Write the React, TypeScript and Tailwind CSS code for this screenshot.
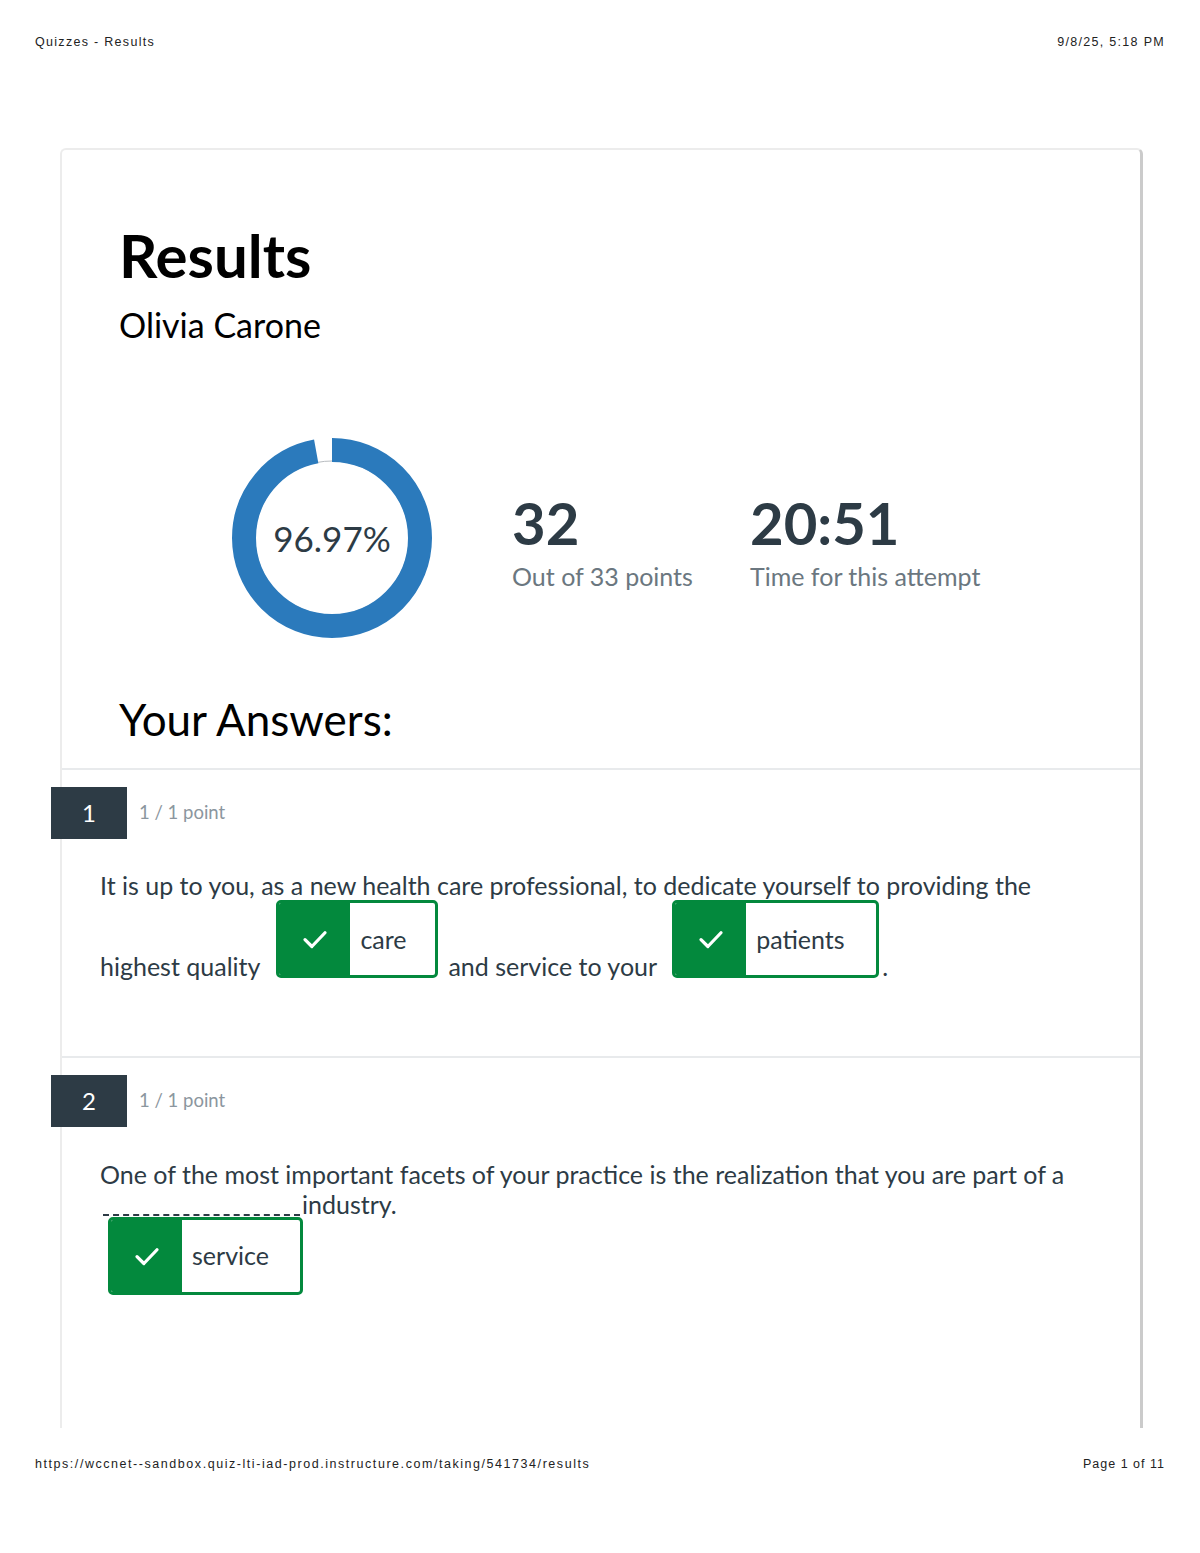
import React from 'react';

function Check() {
  return (
    <svg viewBox="0 0 24 24" className="w-[30px] h-[30px]" fill="none">
      <polyline
        points="4,12.5 9.5,18 20,7"
        stroke="white"
        strokeWidth="2.6"
        strokeLinecap="round"
        strokeLinejoin="round"
      />
    </svg>
  );
}

function AnswerBox({ text, width }: { text: string; width: string }) {
  return (
    <div
      className={`flex h-[78px] ${width} border-[3px] border-[#03893d] rounded-[5px] overflow-hidden bg-white`}
    >
      <div className="w-[71px] bg-[#03893d] flex items-center justify-center">
        <Check />
      </div>
      <span className="pl-[10px] flex items-center text-[25px] text-[#2d3b45]">
        {text}
      </span>
    </div>
  );
}

function Donut() {
  const r = 88;
  const c = 2 * Math.PI * r;
  const pct = 0.9697;
  return (
    <div className="relative w-[200px] h-[200px]">
      <svg viewBox="0 0 200 200" className="w-[200px] h-[200px]">
        <circle cx="100" cy="100" r="77" fill="none" stroke="#b8bcc0" strokeWidth="1" />
        <circle
          cx="100"
          cy="100"
          r="77.5"
          fill="none"
          stroke="white"
          strokeWidth="2"
          strokeDasharray={`${2 * Math.PI * 77.5 * pct} ${c}`}
          transform="rotate(-90 100 100)"
        />
        <circle
          cx="100"
          cy="100"
          r={r}
          fill="none"
          stroke="#2b7abc"
          strokeWidth="24"
          strokeDasharray={`${c * pct} ${c}`}
          transform="rotate(-90 100 100)"
        />
      </svg>
      <div className="absolute inset-0 flex items-center justify-center text-[35px] text-[#2d3b45]">
        96.97%
      </div>
    </div>
  );
}

function QuestionHeader({ n }: { n: number }) {
  return (
    <div className="flex items-center ml-[-49px]">
      <div className="w-[76px] h-[52px] bg-[#2d3b45] text-white text-[24px] flex items-center justify-center">
        {n}
      </div>
      <span className="ml-[12px] text-[18.5px] text-[#8b969e]">1 / 1 point</span>
    </div>
  );
}

export default function App() {
  return (
    <div className="w-[1200px] h-[1553px] bg-white overflow-hidden">
      <div className="flex justify-between px-[35px] pt-[34px] h-[50px] text-[12.5px] leading-[16px] tracking-[1.3px] text-[#222] font-['Liberation_Sans',Arial,sans-serif]">
        <span>Quizzes - Results</span>
        <span>9/8/25, 5:18 PM</span>
      </div>

      <div className="ml-[60px] mt-[98px] w-[1083px] h-[1280px] border-2 border-b-0 border-[#ececec] border-r-[3px] border-r-[#cbcbcb] rounded-t-[6px] font-['Lato',sans-serif]">
        <div className="pl-[57px] pt-[69px]">
          <h1 className="text-[60px] leading-[72px] font-bold text-black">Results</h1>
          <p className="mt-[14px] text-[34px] leading-[40px] text-black">Olivia Carone</p>

          <div className="flex items-start mt-[93px] ml-[113px]">
            <Donut />
            <div className="ml-[80px] mt-[56px] w-[238px]">
              <div className="text-[58px] leading-[58px] font-bold text-[#2d3b45]">32</div>
              <div className="mt-[6px] text-[25px] leading-[36px] text-[#6b7780]">Out of 33 points</div>
            </div>
            <div className="mt-[56px]">
              <div className="text-[58px] leading-[58px] font-bold text-[#2d3b45]">20:51</div>
              <div className="mt-[6px] text-[25px] leading-[36px] text-[#6b7780]">Time for this attempt</div>
            </div>
          </div>

          <h2 className="mt-[55px] text-[44px] leading-[52px] text-black">Your Answers:</h2>
        </div>

        <div className="mt-[23px] h-[2px] bg-[#e8eaec]" />

        <div className="pl-[38px] pt-[17px] h-[286px]">
          <QuestionHeader n={1} />
          <p className="mt-[31px] text-[25px] leading-[30px] text-[#2d3b45]">
            It is up to you, as a new health care professional, to dedicate yourself to providing the
          </p>
          <div className="flex items-end text-[25px] leading-[30px] text-[#2d3b45]">
            <span className="mb-[-3px]">highest quality</span>
            <div className="ml-[16px]">
              <AnswerBox text="care" width="w-[162px]" />
            </div>
            <span className="ml-[10px] mb-[-3px]">and service to your</span>
            <div className="ml-[15px]">
              <AnswerBox text="patients" width="w-[207px]" />
            </div>
            <span className="ml-[3px] mb-[-3px]">.</span>
          </div>
        </div>

        <div className="h-[2px] bg-[#e8eaec]" />

        <div className="pl-[38px] pt-[17px]">
          <QuestionHeader n={2} />
          <p className="mt-[32px] text-[25px] leading-[30px] text-[#2d3b45]">
            One of the most important facets of your practice is the realization that you are part of a
          </p>
          <div className="flex items-end h-[30px] text-[25px] leading-[30px] text-[#2d3b45]">
            <span className="ml-[3px] mb-[3px] w-[197px] border-b-2 border-dashed border-[#2d3b45]" />
            <span className="ml-[2px]">industry.</span>
          </div>
          <div className="ml-[8px] mt-[-2px]">
            <AnswerBox text="service" width="w-[195px]" />
          </div>
        </div>
      </div>

      <div className="flex justify-between px-[35px] mt-[28px] text-[12.5px] leading-[16px] text-[#222] font-['Liberation_Sans',Arial,sans-serif]">
        <span className="tracking-[1.55px]">
          https://wccnet--sandbox.quiz-lti-iad-prod.instructure.com/taking/541734/results
        </span>
        <span className="tracking-[1px]">Page 1 of 11</span>
      </div>
    </div>
  );
}
